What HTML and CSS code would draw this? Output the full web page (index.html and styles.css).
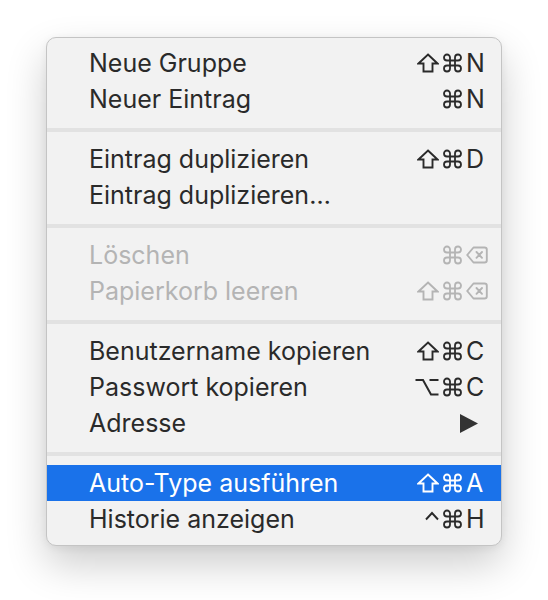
FILE: index.html
```html
<!DOCTYPE html>
<html lang="de">
<head>
<meta charset="utf-8">
<title>Menü</title>
<link rel="stylesheet" href="styles.css">
</head>
<body>
<svg class="defs" width="0" height="0" aria-hidden="true">
  <defs>
    <symbol id="shift" viewBox="0 0 22 20">
      <path d="M11 1.5 L20.5 10.5 H15.5 V18.5 H6.5 V10.5 H1.5 Z" fill="none" stroke="currentColor" stroke-width="1.9" stroke-linejoin="miter"/>
    </symbol>
    <symbol id="cmd" viewBox="0 0 20 20">
      <path d="M7.5 7.5 V4.5 A3 3 0 1 0 4.5 7.5 H15.5 A3 3 0 1 0 12.5 4.5 V15.5 A3 3 0 1 0 15.5 12.5 H4.5 A3 3 0 1 0 7.5 15.5 Z" fill="none" stroke="currentColor" stroke-width="1.8"/>
    </symbol>
    <symbol id="opt" viewBox="0 0 24 18">
      <path d="M0.5 2 H8 L16 16.5 H23.5 M14.5 2 H23.5" fill="none" stroke="currentColor" stroke-width="2"/>
    </symbol>
    <symbol id="bksp" viewBox="0 0 22 18">
      <path d="M7.5 1.5 H18.5 Q20.8 1.5 20.8 3.8 V14.2 Q20.8 16.5 18.5 16.5 H7.5 L1.2 9 Z" fill="none" stroke="currentColor" stroke-width="1.9" stroke-linejoin="round"/>
      <path d="M10.5 6 L16 11.8 M16 6 L10.5 11.8" fill="none" stroke="currentColor" stroke-width="1.9" stroke-linecap="round"/>
    </symbol>
    <symbol id="ctrl" viewBox="0 0 14 10">
      <path d="M1 8.5 L7 2 L13 8.5" fill="none" stroke="currentColor" stroke-width="1.9"/>
    </symbol>
  </defs>
</svg>
<div class="menu">
  <div class="item"><span class="label">Neue Gruppe</span><span class="keys"><span class="mods"><svg class="ic shift"><use href="#shift"/></svg><svg class="ic cmd"><use href="#cmd"/></svg></span><span class="key">N</span></span></div>
  <div class="item"><span class="label">Neuer Eintrag</span><span class="keys"><span class="mods"><svg class="ic cmd"><use href="#cmd"/></svg></span><span class="key">N</span></span></div>
  <div class="sep"></div>
  <div class="item"><span class="label">Eintrag duplizieren</span><span class="keys"><span class="mods"><svg class="ic shift"><use href="#shift"/></svg><svg class="ic cmd"><use href="#cmd"/></svg></span><span class="key">D</span></span></div>
  <div class="item"><span class="label">Eintrag duplizieren…</span></div>
  <div class="sep"></div>
  <div class="item disabled"><span class="label">Löschen</span><span class="keys"><span class="mods"><svg class="ic cmd"><use href="#cmd"/></svg></span><span class="key"><svg class="ic bksp"><use href="#bksp"/></svg></span></span></div>
  <div class="item disabled"><span class="label">Papierkorb leeren</span><span class="keys"><span class="mods"><svg class="ic shift"><use href="#shift"/></svg><svg class="ic cmd"><use href="#cmd"/></svg></span><span class="key"><svg class="ic bksp"><use href="#bksp"/></svg></span></span></div>
  <div class="sep"></div>
  <div class="item"><span class="label">Benutzername kopieren</span><span class="keys"><span class="mods"><svg class="ic shift"><use href="#shift"/></svg><svg class="ic cmd"><use href="#cmd"/></svg></span><span class="key">C</span></span></div>
  <div class="item"><span class="label">Passwort kopieren</span><span class="keys"><span class="mods"><svg class="ic opt"><use href="#opt"/></svg><svg class="ic cmd"><use href="#cmd"/></svg></span><span class="key">C</span></span></div>
  <div class="item"><span class="label">Adresse</span><svg class="arrow" width="18" height="19" viewBox="0 0 18 19"><polygon points="0,0 18,9.5 0,19" fill="currentColor"/></svg></div>
  <div class="sep"></div>
  <div class="item active"><span class="label">Auto-Type ausführen</span><span class="keys"><span class="mods"><svg class="ic shift"><use href="#shift"/></svg><svg class="ic cmd"><use href="#cmd"/></svg></span><span class="key">A</span></span></div>
  <div class="item"><span class="label">Historie anzeigen</span><span class="keys"><span class="mods"><svg class="ic ctrl"><use href="#ctrl"/></svg><svg class="ic cmd"><use href="#cmd"/></svg></span><span class="key">H</span></span></div>
</div>
</body>
</html>
```
FILE: styles.css
```css
html, body {
  margin: 0;
  padding: 0;
  background: #ffffff;
}
body {
  font-family: "Inter", "Roboto", "DejaVu Sans", sans-serif;
  min-height: 600px;
  padding-top: 37px;
  box-sizing: border-box;
}
.defs {
  position: absolute;
  width: 0;
  height: 0;
  overflow: hidden;
}
.menu {
  box-sizing: border-box;
  width: 456px;
  margin: 0 0 54px 46px;
  padding: 7px 0 8px;
  background: #f2f2f2;
  border: 1px solid #c4c4c4;
  border-radius: 10px;
  box-shadow: 0 18px 40px rgba(0, 0, 0, 0.2), 0 2px 8px rgba(0, 0, 0, 0.06);
  overflow: hidden;
}
.item {
  display: flex;
  align-items: center;
  justify-content: space-between;
  height: 36px;
  padding: 0 13px 0 42px;
  color: #2a2a2a;
  font-size: 25px;
}
.label {
  white-space: nowrap;
}
.keys {
  display: flex;
  align-items: center;
  gap: 3px;
  flex-shrink: 0;
}
.mods {
  display: flex;
  align-items: center;
  gap: 3px;
}
.key {
  display: flex;
  align-items: center;
  width: 22px;
  flex-shrink: 0;
  font-size: 25px;
}
.ic {
  display: block;
  flex-shrink: 0;
}
.shift {
  width: 22px;
  height: 20px;
}
.cmd {
  width: 21px;
  height: 20px;
}
.opt {
  width: 24px;
  height: 18px;
}
.bksp {
  width: 22px;
  height: 18px;
}
.ctrl {
  width: 14px;
  height: 10px;
  align-self: flex-start;
  margin-top: 2px;
}
.disabled {
  color: #b4b4b4;
}
.active {
  background: #1a72ea;
  color: #ffffff;
}
.arrow {
  flex-shrink: 0;
  margin-right: 10px;
  color: #333333;
}
.sep {
  height: 4px;
  margin: 11px 0 9px;
  background: #e2e2e2;
}
```
